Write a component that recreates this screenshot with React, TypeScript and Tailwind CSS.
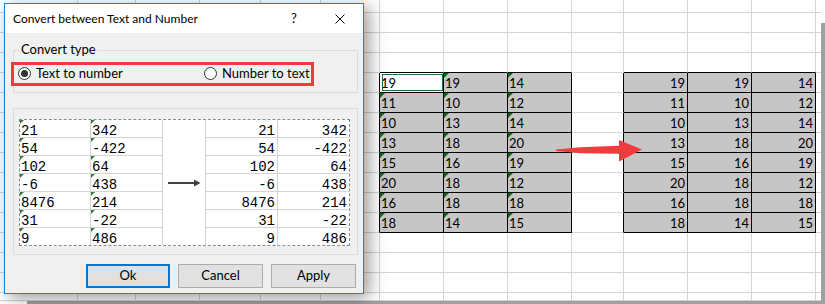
import React from "react";

// spreadsheet column widths (each includes its 1px right gridline)
const colW = [
  "w-[78px]",
  "w-[58px]",
  "w-[64px]",
  "w-[61px]",
  "w-[60px]",
  "w-[59px]",
  "w-[64px]",
  "w-[64px]",
  "w-[64px]",
  "w-[52px]",
  "w-[64px]",
  "w-[64px]",
  "w-[64px]",
  "w-[5px]",
];

const rowH = ["h-[13px]", ...Array(14).fill("h-[20px]"), "h-[8px]"];

const sheet = [
  [19, 19, 14],
  [11, 10, 12],
  [10, 13, 14],
  [13, 18, 20],
  [15, 16, 19],
  [20, 18, 12],
  [16, 18, 18],
  [18, 14, 15],
];

const preview = [
  ["21", "342"],
  ["54", "-422"],
  ["102", "64"],
  ["-6", "438"],
  ["8476", "214"],
  ["31", "-22"],
  ["9", "486"],
];

function SheetCell({ r, c }: { r: number; c: number }) {
  const d = r - 4;
  const dataRow = d >= 0 && d < 8;
  const inLeft = dataRow && c >= 6 && c <= 8;
  const inRight = dataRow && c >= 10 && c <= 12;
  const blackR = dataRow && c >= 5 && c <= 12;
  const blackB =
    inLeft || inRight || (r === 3 && ((c >= 6 && c <= 8) || (c >= 10 && c <= 12)));
  const active = d === 0 && c === 6;

  const cls = [
    colW[c],
    "relative shrink-0 border-b",
    c === 13 ? "" : "border-r",
    blackR ? "border-r-black" : "border-r-[#d4d4d4]",
    blackB ? "border-b-black" : "border-b-[#d4d4d4]",
    (inLeft || inRight) && !active ? "bg-[#c6c6c6]" : "bg-white",
  ].join(" ");

  return (
    <div className={cls}>
      {inLeft && (
        <>
          {active ? (
            <span className="absolute left-[2px] top-[1px] right-0 bottom-[1px] border border-[#217346]" />
          ) : (
            <span className="absolute left-0 top-0 w-0 h-0 border-t-[5px] border-r-[5px] border-t-[#0b6b0b] border-r-transparent" />
          )}
          <div className="pl-[1px] pt-[2px] text-[13px] leading-[16px] text-black">
            {sheet[d][c - 6]}
          </div>
        </>
      )}
      {inRight && (
        <div className="pr-[2px] pt-[2px] text-right text-[13px] leading-[16px] text-black">
          {sheet[d][c - 10]}
        </div>
      )}
    </div>
  );
}

function Sheet() {
  return (
    <div className="flex flex-col w-[821px] h-[301px] overflow-hidden font-['Lato',sans-serif]">
      {rowH.map((h, r) => (
        <div key={r} className={`flex shrink-0 ${h}`}>
          {colW.map((_, c) => (
            <SheetCell key={c} r={r} c={c} />
          ))}
        </div>
      ))}
    </div>
  );
}

function PreviewCol({
  values,
  width,
  right,
  marks,
  last,
}: {
  values: string[];
  width: string;
  right?: boolean;
  marks?: boolean;
  last?: boolean;
}) {
  return (
    <div className={`${width} flex flex-col shrink-0 ${last ? "" : "border-r border-r-[#d4d4d4]"}`}>
      {values.map((v, i) => (
        <div
          key={i}
          className={`relative shrink-0 pt-[4px] ${
            i < 6 ? "h-[18px] border-b border-b-[#d4d4d4]" : "h-[17px]"
          } ${right ? "text-right pr-[2px]" : "pl-[1px]"}`}
        >
          {marks && (
            <span className="absolute left-0 top-0 w-0 h-0 border-t-[4px] border-r-[4px] border-t-[#3f7a3b] border-r-transparent" />
          )}
          {v}
        </div>
      ))}
    </div>
  );
}

function Radio({ on, label }: { on?: boolean; label: string }) {
  return (
    <div className="flex items-center">
      <span className="w-[13px] h-[13px] rounded-full border border-[#333333] bg-white flex items-center justify-center">
        {on && <span className="w-[7px] h-[7px] rounded-full bg-[#333333]" />}
      </span>
      <span className="ml-[5px] text-[13px] leading-[16px] text-black">{label}</span>
    </div>
  );
}

function Dialog() {
  return (
    <div className="absolute left-[4px] top-[3px] w-[360px] h-[291px] border border-[#1883d7] bg-[#f0f0f0] flex flex-col font-['Lato',sans-serif] text-black shadow-[5px_4px_16px_rgba(0,0,0,0.4)]">
      <div className="h-[29px] shrink-0 bg-white flex items-center">
        <span className="flex-1 pl-[8px] text-[12px] leading-[16px]">
          Convert between Text and Number
        </span>
        <div className="w-[46px] h-full flex items-center justify-center text-[13px]">?</div>
        <div className="w-[46px] h-full flex items-center justify-center">
          <svg width="10" height="10" viewBox="0 0 10 10">
            <path d="M0.5 0.5L9.5 9.5M9.5 0.5L0.5 9.5" stroke="#000" strokeWidth="1" />
          </svg>
        </div>
      </div>

      <div className="flex-1 pl-[8px] pr-[5px] pt-[17px] flex flex-col">
        <div className="relative h-[43px] shrink-0 border border-[#dcdcdc]">
          <span className="absolute left-[6px] top-[-10px] px-[1px] bg-[#f0f0f0] text-[13px] leading-[16px]">
            Convert type
          </span>
          <div className="mt-[14px] pl-[4px] flex">
            <div className="w-[186px]">
              <Radio on label="Text to number" />
            </div>
            <Radio label="Number to text" />
          </div>
        </div>

        <div className="mt-[15px] h-[147px] shrink-0 border border-[#dcdcdc]">
          <div className="mt-[10px] ml-[5px] w-[331px] h-[127px] border border-dashed border-[#8a8a8a] bg-white flex font-['Liberation_Mono',monospace] text-[14px] leading-[14px] text-black">
            <PreviewCol values={preview.map((p) => p[0])} width="w-[71px]" marks />
            <PreviewCol values={preview.map((p) => p[1])} width="w-[72px]" marks />
            <div className="w-[43px] shrink-0 border-r border-r-[#d4d4d4] flex items-center justify-center">
              <svg width="33" height="8" viewBox="0 0 33 8">
                <rect x="0" y="3" width="27" height="2" fill="#404040" />
                <polygon points="26,0.5 32.5,4 26,7.5" fill="#404040" />
              </svg>
            </div>
            <PreviewCol values={preview.map((p) => p[0])} width="w-[72px]" right />
            <PreviewCol values={preview.map((p) => p[1])} width="w-[71px]" right last />
          </div>
        </div>

        <div className="mt-[9px] pr-[2px] flex justify-end gap-[8px] text-[13px]">
          <button className="w-[84px] h-[24px] border-2 border-[#0078d7] bg-[#e1e1e1]">Ok</button>
          <button className="w-[85px] h-[24px] border border-[#adadad] bg-[#e1e1e1]">Cancel</button>
          <button className="w-[85px] h-[24px] border border-[#adadad] bg-[#e1e1e1]">Apply</button>
        </div>
      </div>

      {/* red highlight around the radio options */}
      <div className="absolute left-[6px] top-[58px] w-[303px] h-[24px] border-[3px] border-[#ef3b3f]" />
    </div>
  );
}

export default function App() {
  return (
    <div className="relative w-[825px] h-[304px] overflow-hidden bg-white flex flex-col">
      <div className="flex h-[301px] shrink-0">
        <Sheet />
        <div className="w-[4px] mt-[23px] bg-[#a0a0a0]" />
      </div>
      <div className="ml-[27px] h-[3px] bg-[#a0a0a0]" />

      <Dialog />

      <svg
        className="absolute left-[550px] top-[136px]"
        width="96"
        height="28"
        viewBox="550 136 96 28"
      >
        <polygon
          points="556,149.6 580,147.3 619,145.8 619,140 642,149.4 619,161.5 619,153.8 580,153.3 556,151"
          fill="#f03c3c"
        />
      </svg>
    </div>
  );
}
